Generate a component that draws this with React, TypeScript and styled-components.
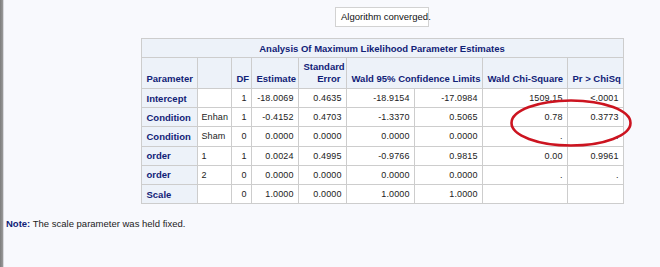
import React from "react"
import styled, { createGlobalStyle } from "styled-components"

const GlobalStyle = createGlobalStyle`
  html, body {
    margin: 0;
    padding: 0;
    overflow: hidden;
    background: #f8f9fd;
  }
  body {
    font-family: "Liberation Sans", Arial, sans-serif;
  }
`

const Frame = styled.div`
  display: flex;
  width: 660px;
  height: 267px;
  background: #f8f9fd;
  position: relative;
`

const SideBar = styled.div`
  width: 3px;
  flex: none;
  background: linear-gradient(to right, #7d7d7d, #9a9a9a);
  border-right: 1px solid #d8d9de;
`

const Page = styled.div`
  flex: 1;
  display: flex;
  flex-direction: column;
  padding-top: 7px;
`

const Output = styled.div`
  width: 482px;
  margin-left: 137px;
  display: flex;
  flex-direction: column;
  align-items: center;
`

const Message = styled.div`
  background: #fff;
  border: 1px solid #d2d2d2;
  font-size: 9.5px;
  color: #111;
  height: 18px;
  line-height: 18px;
  padding: 0 5px;
  width: 82px;
  white-space: nowrap;
`

const Table = styled.table`
  margin-top: 11px;
  border-collapse: collapse;
  table-layout: fixed;
  width: 482px;
  font-size: 9.5px;
  border: 1px solid #c6c6c6;
  background: #fff;

  td, th {
    border: 1px solid #cdcdcd;
    padding: 0 5px;
    white-space: nowrap;
    overflow: hidden;
  }
`

const Title = styled.th`
  height: 18px;
  background: #edf2f9;
  color: #112277;
  font-weight: bold;
  text-align: center;
`

const Head = styled.th<{ $align?: string }>`
  height: 27px;
  background: #edf2f9;
  color: #112277;
  font-weight: bold;
  text-align: ${(p) => p.$align || "right"};
  vertical-align: bottom;
  line-height: 12px;
  padding-bottom: 3px !important;
`

const Row = styled.tr`
  height: 19.2px;
`

const RowHead = styled.th`
  background: #edf2f9;
  color: #112277;
  font-weight: bold;
  text-align: left;
`

const Cell = styled.td<{ $left?: boolean }>`
  color: #222;
  font-size: 9px;
  letter-spacing: 0.1px;
  padding: 0 4px !important;
  text-align: ${(p) => (p.$left ? "left" : "right")};
`

const Note = styled.div`
  margin-left: 2px;
  margin-top: 14px;
  font-size: 9.5px;
  color: #222;
  line-height: 12px;

  b {
    color: #112277;
  }
`

const Circle = styled.svg`
  position: absolute;
  left: 509px;
  top: 98px;
  overflow: visible;
`

const widths = [56, 34, 20, 47, 48, 68, 68, 85, 56]

const rows = [
  ["Intercept", "", "1", "-18.0069", "0.4635", "-18.9154", "-17.0984", "1509.15", "<.0001"],
  ["Condition", "Enhan", "1", "-0.4152", "0.4703", "-1.3370", "0.5065", "0.78", "0.3773"],
  ["Condition", "Sham", "0", "0.0000", "0.0000", "0.0000", "0.0000", ".", "."],
  ["order", "1", "1", "0.0024", "0.4995", "-0.9766", "0.9815", "0.00", "0.9961"],
  ["order", "2", "0", "0.0000", "0.0000", "0.0000", "0.0000", ".", "."],
  ["Scale", "", "0", "1.0000", "0.0000", "1.0000", "1.0000", "", ""],
]

export default function App() {
  return (
    <>
      <GlobalStyle />
      <Frame>
        <SideBar />
        <Page>
          <Output>
            <Message>Algorithm converged.</Message>
            <Table>
              <colgroup>
                {widths.map((w, i) => (
                  <col key={i} style={{ width: w }} />
                ))}
              </colgroup>
              <thead>
                <tr>
                  <Title colSpan={9}>Analysis Of Maximum Likelihood Parameter Estimates</Title>
                </tr>
                <tr>
                  <Head $align="left">Parameter</Head>
                  <Head></Head>
                  <Head>DF</Head>
                  <Head>Estimate</Head>
                  <Head>
                    Standard
                    <br />
                    Error
                  </Head>
                  <Head colSpan={2} $align="center">Wald 95% Confidence Limits</Head>
                  <Head>Wald Chi-Square</Head>
                  <Head>Pr &gt; ChiSq</Head>
                </tr>
              </thead>
              <tbody>
                {rows.map((r, i) => (
                  <Row key={i}>
                    <RowHead>{r[0]}</RowHead>
                    <Cell $left>{r[1]}</Cell>
                    {r.slice(2).map((v, j) => (
                      <Cell key={j}>{v}</Cell>
                    ))}
                  </Row>
                ))}
              </tbody>
            </Table>
          </Output>
          <Note>
            <b>Note:</b> The scale parameter was held fixed.
          </Note>
        </Page>
        <Circle width="124" height="50" viewBox="0 0 124 50">
          <ellipse cx="62" cy="25" rx="59.5" ry="22.5" fill="none" stroke="#cc1420" strokeWidth="2.6" />
        </Circle>
      </Frame>
    </>
  )
}
